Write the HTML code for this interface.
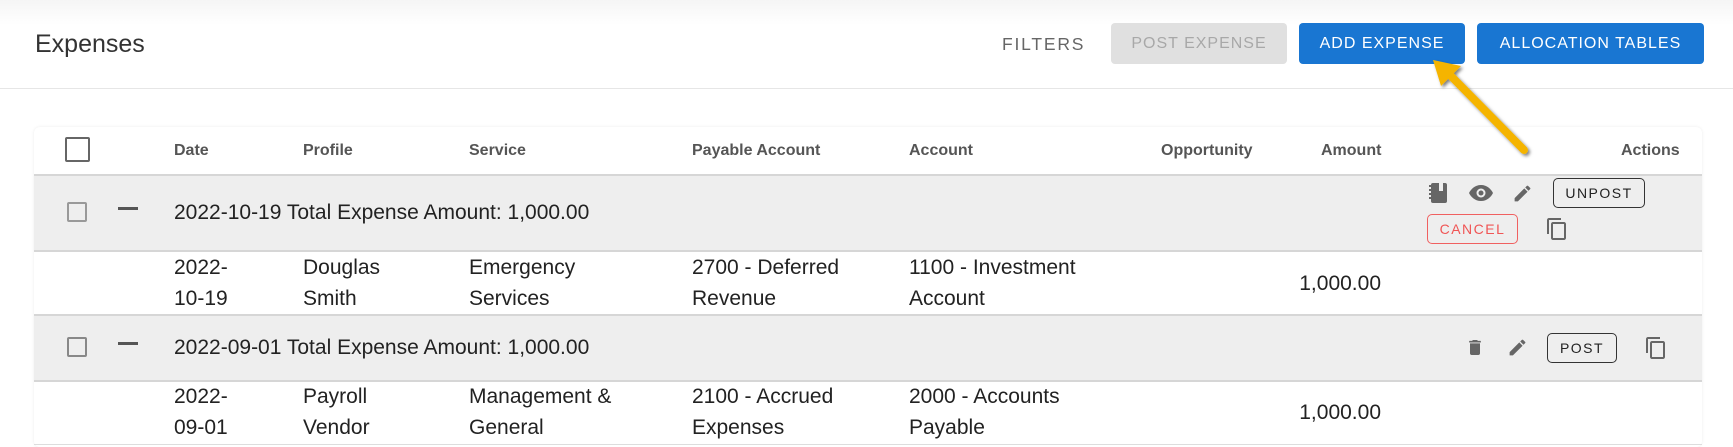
<!DOCTYPE html>
<html><head><style>
*{box-sizing:border-box;margin:0;padding:0}
body{width:1733px;height:445px;background:#fff;font-family:"Liberation Sans",Arial,sans-serif;position:relative;overflow:hidden;color:#222}
.abs{position:absolute}
.hdr{position:absolute;left:0;top:0;width:1733px;height:89px;border-bottom:1px solid #e6e6e6;background:linear-gradient(#f5f5f5,#fff 25px)}
.btn{position:absolute;top:23px;height:41px;border-radius:4px;font-size:16px;letter-spacing:1px;display:flex;align-items:center;justify-content:center}
.card{position:absolute;left:34px;top:127px;width:1668px;height:320px;border-radius:6px;box-shadow:0 0 3px rgba(0,0,0,.08);background:#fff}
.th{position:absolute;top:142px;font-size:16px;font-weight:bold;color:#555}
.grp{position:absolute;left:34px;width:1668px;background:#eee;border-top:2px solid #d6d6d6;border-bottom:2px solid #d6d6d6}
.cb{position:absolute;width:20px;height:20px;border:2px solid #888;border-radius:2px}
.dash{position:absolute;width:20px;height:3px;background:#555}
.t{position:absolute;font-size:21px;color:#222;line-height:31px}
.ob{position:absolute;border:1px solid #333;border-radius:5px;font-size:14px;letter-spacing:1.5px;display:flex;align-items:center;justify-content:center;color:#222}
</style></head><body>
<div class="hdr"></div>
<div class="abs" style="left:35px;top:30px;font-size:25px;color:#333">Expenses</div>
<div class="abs" style="left:1002px;top:34px;font-size:17.5px;letter-spacing:1.8px;color:#666">FILTERS</div>
<div class="btn" style="left:1111px;width:176px;background:#e0e0e0;color:#a8a8a8">POST EXPENSE</div>
<div class="btn" style="left:1299px;width:166px;background:#1976d2;color:#fff">ADD EXPENSE</div>
<div class="btn" style="left:1477px;width:227px;background:#1976d2;color:#fff">ALLOCATION TABLES</div>

<div class="card"></div>
<div class="cb" style="left:65px;top:137px;width:25px;height:25px;border-color:#666"></div>
<div class="th" style="left:174px">Date</div>
<div class="th" style="left:303px">Profile</div>
<div class="th" style="left:469px">Service</div>
<div class="th" style="left:692px">Payable Account</div>
<div class="th" style="left:909px">Account</div>
<div class="th" style="left:1161px">Opportunity</div>
<div class="th" style="left:1321px">Amount</div>
<div class="th" style="left:1621px">Actions</div>

<div class="grp" style="top:174px;height:78px"></div>
<div class="cb" style="left:67px;top:202px;border-color:#999"></div>
<div class="dash" style="left:118px;top:207px"></div>
<div class="t" style="left:174px;top:197px">2022-10-19 Total Expense Amount: 1,000.00</div>
<svg class="abs" style="left:1428px;top:183px" width="22" height="20" viewBox="0 0 22 20"><rect x="3" y="0" width="16" height="20" rx="2" fill="#666"/><path d="M1 3h3M1 7h3M1 11h3M1 15h3" stroke="#666" stroke-width="2"/><rect x="11" y="0" width="4" height="8" fill="#eee"/></svg>
<svg class="abs" style="left:1469px;top:184px" width="24" height="18" viewBox="0 0 24 18"><path d="M12 1C6 1 2 5 0 9c2 4 6 8 12 8s10-4 12-8C22 5 18 1 12 1z" fill="#666"/><circle cx="12" cy="9" r="4.5" fill="#eee"/><circle cx="12" cy="9" r="2.5" fill="#666"/></svg>
<svg class="abs" style="left:1512px;top:183px" width="21" height="21" viewBox="0 0 24 24"><path d="M3 17.25V21h3.75L17.81 9.94l-3.75-3.75L3 17.25zM20.71 7.04a1 1 0 000-1.41l-2.34-2.34a1 1 0 00-1.41 0l-1.83 1.83 3.75 3.75 1.83-1.83z" fill="#666"/></svg>
<div class="ob" style="left:1553px;top:178px;width:92px;height:30px">UNPOST</div>
<div class="ob" style="left:1427px;top:214px;width:91px;height:30px;border-color:#f06060;color:#f05555">CANCEL</div>
<svg class="abs" style="left:1545px;top:217px" width="24" height="24" viewBox="0 0 24 24"><path d="M16 1H4c-1.1 0-2 .9-2 2v14h2V3h12V1zm3 4H8c-1.1 0-2 .9-2 2v14c0 1.1.9 2 2 2h11c1.1 0 2-.9 2-2V7c0-1.1-.9-2-2-2zm0 16H8V7h11v14z" fill="#666"/></svg>

<div class="t" style="left:174px;top:252px">2022-<br>10-19</div>
<div class="t" style="left:303px;top:252px">Douglas<br>Smith</div>
<div class="t" style="left:469px;top:252px">Emergency<br>Services</div>
<div class="t" style="left:692px;top:252px">2700 - Deferred<br>Revenue</div>
<div class="t" style="left:909px;top:252px">1100 - Investment<br>Account</div>
<div class="t" style="left:1281px;top:268px;width:100px;text-align:right">1,000.00</div>

<div class="grp" style="top:314px;height:68px"></div>
<div class="cb" style="left:67px;top:337px;border-color:#888"></div>
<div class="dash" style="left:118px;top:342px"></div>
<div class="t" style="left:174px;top:332px">2022-09-01 Total Expense Amount: 1,000.00</div>
<svg class="abs" style="left:1465px;top:337px" width="20" height="21" viewBox="0 0 24 24"><path d="M6 19c0 1.1.9 2 2 2h8c1.1 0 2-.9 2-2V7H6v12zM19 4h-3.5l-1-1h-5l-1 1H5v2h14V4z" fill="#666"/></svg>
<svg class="abs" style="left:1507px;top:337px" width="21" height="21" viewBox="0 0 24 24"><path d="M3 17.25V21h3.75L17.81 9.94l-3.75-3.75L3 17.25zM20.71 7.04a1 1 0 000-1.41l-2.34-2.34a1 1 0 00-1.41 0l-1.83 1.83 3.75 3.75 1.83-1.83z" fill="#666"/></svg>
<div class="ob" style="left:1547px;top:333px;width:70px;height:30px">POST</div>
<svg class="abs" style="left:1644px;top:336px" width="24" height="24" viewBox="0 0 24 24"><path d="M16 1H4c-1.1 0-2 .9-2 2v14h2V3h12V1zm3 4H8c-1.1 0-2 .9-2 2v14c0 1.1.9 2 2 2h11c1.1 0 2-.9 2-2V7c0-1.1-.9-2-2-2zm0 16H8V7h11v14z" fill="#666"/></svg>

<div class="t" style="left:174px;top:381px">2022-<br>09-01</div>
<div class="t" style="left:303px;top:381px">Payroll<br>Vendor</div>
<div class="t" style="left:469px;top:381px">Management &amp;<br>General</div>
<div class="t" style="left:692px;top:381px">2100 - Accrued<br>Expenses</div>
<div class="t" style="left:909px;top:381px">2000 - Accounts<br>Payable</div>
<div class="t" style="left:1281px;top:397px;width:100px;text-align:right">1,000.00</div>
<div class="abs" style="left:34px;top:444px;width:1668px;height:1px;background:#ddd"></div>

<svg class="abs" style="left:0;top:0" width="1733" height="445">
<defs><filter id="s"><feDropShadow dx="2" dy="2" stdDeviation="1.5" flood-color="#000" flood-opacity=".5"/></filter></defs>
<g filter="url(#s)"><line x1="1524" y1="150" x2="1447" y2="72" stroke="#f5b400" stroke-width="8" stroke-linecap="round"/><polygon points="1433,60 1461,66 1441,86" fill="#f5b400"/></g>
</svg>
</body></html>
